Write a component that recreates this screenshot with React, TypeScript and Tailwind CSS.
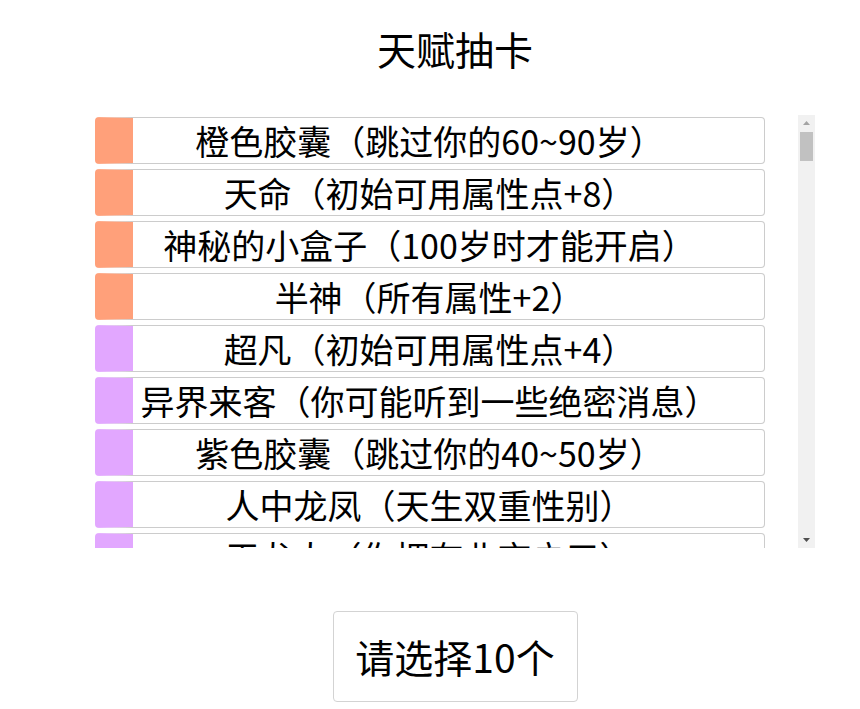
import { useState } from "react"

// grade → colour of the strip on the left of each card
const gradeStrip: Record<number, string> = {
  3: "border-l-[#ffa07a]",
  2: "border-l-[#e2a7ff]",
  1: "border-l-[#6495ed]",
  0: "border-l-[#d8d8d8]",
}

const talents: [number, string][] = [
  [3, "橙色胶囊（跳过你的60~90岁）"],
  [3, "天命（初始可用属性点+8）"],
  [3, "神秘的小盒子（100岁时才能开启）"],
  [3, "半神（所有属性+2）"],
  [2, "超凡（初始可用属性点+4）"],
  [2, "异界来客（你可能听到一些绝密消息）"],
  [2, "紫色胶囊（跳过你的40~50岁）"],
  [2, "人中龙凤（天生双重性别）"],
  [2, "天龙人（你拥有北京户口）"],
  [2, "骨骼惊奇（体质+3）"],
  [2, "神童（智力+3）"],
  [2, "富二代（家境+3）"],
  [2, "倾城（颜值+3）"],
  [2, "天生快乐（快乐+3）"],
  [2, "人类进化（所有属性+1）"],
  [2, "疯狂科学家（你会投身科研）"],
  [2, "不老传说（衰老速度减慢）"],
  [2, "转世（保留前世的一些记忆）"],
  [2, "天选之人（运气特别好）"],
  [2, "金色传说（抽卡必出传说）"],
  [2, "三胞胎（你有两个兄弟姐妹）"],
  [2, "宇宙的尽头（你会考上编制）"],
  [2, "永动机（精力旺盛）"],
  [2, "命硬（不容易死亡）"],
  [2, "蓝色胶囊（跳过你的20~30岁）"],
  [2, "神秘老人（你会遇到一位高人）"],
  [2, "穿越者（你知道未来的一些事）"],
  [2, "万人迷（颜值+2 快乐+1）"],
  [2, "大器晚成（40岁后所有属性+1）"],
  [2, "天赋异禀（初始可用属性点+2）"],
  [1, "祖传药丸（体质+2）"],
  [1, "学霸（智力+2）"],
  [1, "小康之家（家境+2）"],
  [1, "美人胚子（颜值+2）"],
  [1, "乐天派（快乐+2）"],
  [1, "白色胶囊（跳过你的10~20岁）"],
  [1, "三十而立（30岁时家境+2）"],
  [1, "四十不惑（40岁时智力+2）"],
  [1, "五十知天命（50岁时快乐+2）"],
  [1, "随身玉佩（或许有护身作用）"],
  [1, "红肚兜（小时候保平安）"],
  [1, "双胞胎（你有一个兄弟或姐妹）"],
  [1, "城市之光（出生在城市）"],
  [1, "少数民族（高考加分）"],
  [1, "早熟（智力成长较快）"],
  [1, "运动健将（体质+1 快乐+1）"],
  [1, "音乐天赋（你很会唱歌）"],
  [1, "绘画天赋（你很会画画）"],
  [1, "文艺青年（你喜欢文学）"],
  [1, "理科天才（你擅长数学）"],
  [1, "老司机（驾驶技术很好）"],
  [1, "宠物大师（你很会养宠物）"],
  [1, "头铁（不容易生病）"],
  [1, "家中老宅（可能会拆迁）"],
  [1, "附近有公园（快乐+1）"],
  [1, "活到老学到老（智力缓慢增长）"],
  [1, "锦鲤（运气稍好）"],
  [1, "书香门第（智力+1 家境+1）"],
  [1, "练武奇才（体质+2）"],
  [1, "好人缘（你朋友很多）"],
  [1, "贵人相助（关键时刻有人帮忙）"],
  [1, "外语达人（你会说多国语言）"],
  [1, "厨艺精湛（你做饭很好吃）"],
  [1, "过目不忘（记忆力很好）"],
  [1, "长寿基因（寿命更长）"],
  [1, "海外关系（你有亲戚在国外）"],
  [1, "电竞选手（你游戏打得很好）"],
  [1, "下棋高手（智力+1）"],
  [1, "幸运儿（中奖几率提高）"],
  [0, "强身健体（体质+1）"],
  [0, "聪颖（智力+1）"],
  [0, "家境优渥（家境+1）"],
  [0, "清秀（颜值+1）"],
  [0, "乐观（快乐+1）"],
  [0, "生而为男（性别一定为男）"],
  [0, "生而为女（性别一定为女）"],
  [0, "独生子女（你没有兄弟姐妹）"],
  [0, "网瘾少年（沉迷网络游戏）"],
  [0, "动漫高手（你很喜欢二次元）"],
  [0, "易胖体质（你很容易发胖）"],
  [0, "乡间微风（出生在农村）"],
  [0, "晚熟（智力成长较慢）"],
  [0, "体弱多病（容易生病）"],
  [0, "近视眼（需要戴眼镜）"],
  [0, "左撇子（你习惯用左手）"],
  [0, "夜猫子（你习惯熬夜）"],
  [0, "早起鸟（你习惯早起）"],
  [0, "吃货（你很爱吃）"],
  [0, "路痴（你经常迷路）"],
  [0, "话痨（你很能聊）"],
  [0, "社恐（你不擅长社交）"],
  [0, "学渣（智力-1）"],
  [0, "丑小鸭（颜值-1）"],
  [0, "天生抑郁（快乐-3）"],
  [0, "白化病（你的皮肤很白）"],
  [0, "先天免疫缺陷（体质-2）"],
  [0, "家道中落（家境-2）"],
  [0, "丁克（不会生育）"],
  [0, "完美主义（容易焦虑）"],
  [0, "恐高（你害怕高处）"],
  [0, "失眠（快乐-1）"],
  [0, "花粉过敏（春天很难受）"],
  [0, "五音不全（你唱歌跑调）"],
  [0, "拖延症（总是最后一刻完成）"],
  [0, "选择困难（你很难做决定）"],
  [0, "老好人（你不会拒绝别人）"],
  [0, "宅（你很少出门）"],
  [0, "旅行家（你喜欢到处走）"],
  [0, "追星族（你有喜欢的偶像）"],
  [0, "收藏家（你喜欢收集东西）"],
  [0, "秃头（头发越来越少）"],
  [0, "洁癖（你很爱干净）"],
  [0, "记性差（你总忘事）"],
  [0, "普通人（没有任何效果）"],
  [0, "平凡之路（没有任何效果）"],
]

const LIST_H = 433
const ARROW_H = 17
const ROW_H = 52

function TalentCard({ grade, text }: { grade: number; text: string }) {
  return (
    <div
      className={`w-[670px] h-[47px] mb-[5px] flex items-center justify-center border border-[#cccccc] border-l-[38px] rounded-[4px] pr-[38px] text-[34px] leading-none whitespace-nowrap text-black ${gradeStrip[grade]}`}
    >
      {text}
    </div>
  )
}

function Arrow({ up, color }: { up?: boolean; color: string }) {
  return (
    <svg width="7" height="4" viewBox="0 0 7 4" className="block">
      <polygon points={up ? "3.5,0 7,4 0,4" : "0,0 7,0 3.5,4"} fill={color} />
    </svg>
  )
}

export default function App() {
  const [picked] = useState(10)
  const [scrollTop, setScrollTop] = useState(0)

  // scrollbar thumb follows the list
  const contentH = talents.length * ROW_H + 2
  const trackH = LIST_H - ARROW_H * 2
  const thumbH = Math.max(17, (trackH * LIST_H) / contentH)
  const thumbTop = ((trackH - thumbH) * scrollTop) / (contentH - LIST_H)

  return (
    <div className="min-h-screen bg-white pl-[50px] flex flex-col items-center font-['Noto_Sans_CJK_SC',sans-serif] text-black">
      {/* 标题 */}
      <div className="mt-[24px] text-[39px] leading-[49px]">天赋抽卡</div>

      {/* 天赋列表 */}
      <div className="mt-[42px] w-[720px] h-[433px] flex">
        <div
          className="flex-1 overflow-y-scroll pt-[2px] [scrollbar-width:none]"
          onScroll={(e) => setScrollTop(e.currentTarget.scrollTop)}
        >
          {talents.map(([grade, text], i) => (
            <TalentCard key={i} grade={grade} text={text} />
          ))}
        </div>

        <div className="w-[17px] bg-[#f1f1f1] flex flex-col">
          <div className="h-[17px] flex items-center justify-center pb-[1px]">
            <Arrow up color={scrollTop > 0 ? "#505050" : "#a3a3a3"} />
          </div>
          <div className="flex-1 px-[2px]">
            <div className="bg-[#c1c1c1]" style={{ height: thumbH, marginTop: thumbTop }} />
          </div>
          <div className="h-[17px] flex items-center justify-center pt-[1px]">
            <Arrow color="#505050" />
          </div>
        </div>
      </div>

      <button className="mt-[63px] w-[245px] h-[91px] border border-[#d3d3d3] rounded-[4px] bg-white text-[39px] leading-none text-black">
        请选择{picked}个
      </button>
    </div>
  )
}
